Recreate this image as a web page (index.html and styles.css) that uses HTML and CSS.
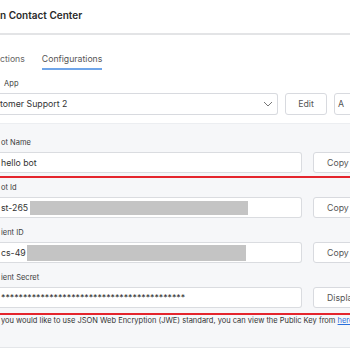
FILE: index.html
```html
<!DOCTYPE html>
<html>
<head>
<meta charset="utf-8">
<link rel="stylesheet" href="styles.css">
</head>
<body>
<div class="page">
  <div class="header">n Contact Center</div>
  <div class="tabs">
    <div class="tab">ctions</div>
    <div class="tab active">Configurations</div>
  </div>
  <div class="app-block">
    <div class="label app-label">&nbsp;App</div>
    <div class="app-row">
      <div class="select">
        <span>tomer Support 2</span>
        <svg class="chev" width="10" height="6" viewBox="0 0 10 6"><path d="M1 1 L5 5 L9 1" fill="none" stroke="#777" stroke-width="1"/></svg>
      </div>
      <div class="btn edit">Edit</div>
      <div class="btn add">A</div>
    </div>
  </div>
  <div class="section">
    <div class="field">
      <div class="label">ot Name</div>
      <div class="row">
        <div class="input">hello bot</div>
        <div class="btn side">Copy</div>
      </div>
    </div>
    <div class="field">
      <div class="label">ot Id</div>
      <div class="row">
        <div class="input">st-265<span class="redact r1"></span></div>
        <div class="btn side">Copy</div>
      </div>
    </div>
    <div class="field">
      <div class="label">ient ID</div>
      <div class="row">
        <div class="input">cs-49<span class="redact r2"></span></div>
        <div class="btn side">Copy</div>
      </div>
    </div>
    <div class="field">
      <div class="label">ient Secret</div>
      <div class="row">
        <div class="input">******************************************</div>
        <div class="btn side">Display</div>
      </div>
    </div>
    <div class="note">you would like to use JSON Web Encryption (JWE) standard, you can view the Public Key from <a class="link">here</a></div>
    <div class="annot"></div>
  </div>
</div>
</body>
</html>
```
FILE: styles.css
```css
html, body {
  margin: 0;
  padding: 0;
  background: #ffffff;
  overflow: hidden;
}
body {
  width: 350px;
  height: 350px;
  font-family: Inter, "Noto Sans", sans-serif;
  color: #333;
}
.page {
  width: 350px;
  overflow: hidden;
}
.header {
  height: 35px;
  box-sizing: border-box;
  padding-top: 8px;
  font-size: 10px;
  font-weight: 600;
  color: #2a2a2a;
  line-height: 14px;
  border-bottom: 2px solid #e3e4e6;
}
.tabs {
  display: flex;
  gap: 17px;
  padding-top: 18px;
}
.tab {
  font-size: 8.7px;
  line-height: 12px;
  color: #666;
  padding-bottom: 3px;
  border-bottom: 2px solid transparent;
}
.tab.active {
  color: #555;
  border-bottom-color: #6fa5e9;
}
.app-block {
  padding-top: 9px;
}
.label {
  font-size: 7.5px;
  line-height: 10px;
  color: #3a3a3a;
  padding-left: 1px;
}
.app-label {
  padding-left: 2px;
}
.app-row {
  display: flex;
  margin-top: 4px;
  height: 22px;
}
.app-row > * {
  flex-shrink: 0;
}
.select {
  width: 278px;
  box-sizing: border-box;
  border: 1px solid #d8dadf;
  border-left: none;
  border-radius: 0 3px 3px 0;
  display: flex;
  align-items: center;
  justify-content: space-between;
  padding-right: 4px;
  font-size: 8.75px;
  color: #333;
}
.btn {
  box-sizing: border-box;
  border: 1px solid #d8dadf;
  border-radius: 3px;
  background: #fff;
  font-size: 8.75px;
  color: #555;
  display: flex;
  align-items: center;
  justify-content: center;
}
.edit {
  width: 42px;
  margin-left: 7px;
}
.add {
  width: 30px;
  margin-left: 7px;
  justify-content: flex-start;
  padding-left: 3px;
}
.section {
  margin-top: 8px;
  background: #f6f7f9;
  border-top: 1px solid #eceef1;
  border-bottom: 1px solid #e4e6e9;
  padding-top: 14px;
  height: 209px;
  position: relative;
}
.field {
  margin-bottom: 10px;
}
.row {
  display: flex;
  margin-top: 4px;
  height: 21px;
}
.row > * {
  flex-shrink: 0;
}
.input {
  width: 302px;
  box-sizing: border-box;
  background: #fff;
  border: 1px solid #dadce0;
  border-left: none;
  border-radius: 0 3px 3px 0;
  padding-left: 1px;
  font-size: 8.75px;
  color: #333;
  display: flex;
  align-items: center;
  white-space: nowrap;
  overflow: hidden;
}
.redact {
  display: inline-block;
  background: #c4c4c4;
  height: 14px;
  margin-left: 2px;
}
.r1 { width: 218px; }
.r2 { width: 219px; height: 16px; margin-left: 1px; }
.side {
  width: 50px;
  margin-left: 11px;
  justify-content: flex-start;
  padding-left: 13px;
}
.note {
  font-size: 7.5px;
  line-height: 10px;
  color: #333;
  padding-left: 1px;
  margin-top: -2px;
  white-space: nowrap;
}
.link {
  color: #2a6fdb;
  text-decoration: underline;
}
.annot {
  position: absolute;
  left: -6px;
  right: -6px;
  top: 52px;
  height: 135px;
  border-top: 2px solid #e4252d;
  border-bottom: 2px solid #e4252d;
  pointer-events: none;
}
```
